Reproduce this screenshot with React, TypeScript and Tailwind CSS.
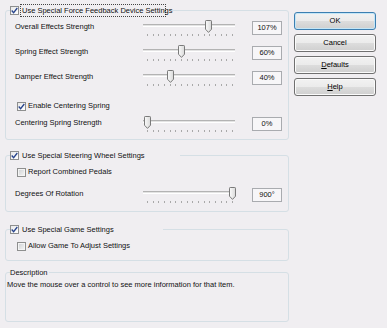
import React from "react";

function Check({ checked }: { checked: boolean }) {
  return (
    <span
      className={
        "w-[9px] h-[9px] shrink-0 border border-[#8e8f8f] flex items-center justify-center " +
        (checked
          ? "bg-[linear-gradient(135deg,#e9e9e9,#ffffff)]"
          : "bg-[linear-gradient(135deg,#cdd0d3,#f7f7f7)] shadow-[inset_0_0_0_1px_#f4f4f4]")
      }
    >
      {checked && (
        <svg width="7" height="7" viewBox="0 0 7 7">
          <path d="M0.7 3.5 L2.6 5.7 L6.3 1" stroke="#27438c" strokeWidth="1.3" fill="none" />
        </svg>
      )}
    </span>
  );
}

function Slider({ frac }: { frac: number }) {
  const left = 3 + Math.round(frac * 85);
  return (
    <div className="relative w-[96px] h-[18px] shrink-0">
      <div className="absolute left-[2px] right-[2px] top-[4px] h-[3px] border-t border-b border-t-[#b3b3b3] border-b-[#ffffff] bg-[#e3e3e3]" />
      <div className="absolute left-[6px] right-[4px] top-[14px] flex justify-between">
        {Array.from({ length: 16 }).map((_, i) => (
          <span key={i} className="w-px h-[2px] bg-[#a9a9a9]" />
        ))}
      </div>
      <svg className="absolute top-0" style={{ left }} width="7" height="13" viewBox="0 0 7 13">
        <defs>
          <linearGradient id="tg" x1="0" y1="0" x2="1" y2="0">
            <stop offset="0" stopColor="#fbfbfb" />
            <stop offset="1" stopColor="#d9d9d9" />
          </linearGradient>
        </defs>
        <path
          d="M1.2 0.5 H5.8 Q6.5 0.5 6.5 1.2 V9.2 L3.5 12.4 L0.5 9.2 V1.2 Q0.5 0.5 1.2 0.5 Z"
          fill="url(#tg)"
          stroke="#7a7a7a"
          strokeWidth="1"
        />
      </svg>
    </div>
  );
}

function SliderRow({
  label,
  frac,
  value,
  className,
}: {
  label: string;
  frac: number;
  value: string;
  className: string;
}) {
  return (
    <div className={"flex h-[18px] items-start " + className}>
      <span className="w-[126px] shrink-0 leading-[14px]">{label}</span>
      <Slider frac={frac} />
      <div className="ml-[15px] mt-[1px] w-[30px] h-[14px] border border-[#a9abaf] bg-[#f7f6f8] flex items-center justify-center leading-none">
        {value}
      </div>
    </div>
  );
}

function CheckRow({ label, checked, className }: { label: string; checked: boolean; className: string }) {
  return (
    <div className={"flex items-center h-[12px] ml-[2px] " + className}>
      <Check checked={checked} />
      <span className="ml-[2px] leading-none">{label}</span>
    </div>
  );
}

function Button({ children, primary }: { children: React.ReactNode; primary?: boolean }) {
  return (
    <button
      className={
        "h-[18px] w-[82px] rounded-[3px] border flex items-center justify-center leading-none text-black bg-[linear-gradient(to_bottom,#f2f2f2_0%,#ebebeb_50%,#dddddd_50%,#cfcfcf_100%)] " +
        (primary
          ? "border-[#3c7fb1] shadow-[inset_0_0_0_1px_#c4e6f7]"
          : "border-[#707070] shadow-[inset_0_0_0_1px_#fbfbfb]")
      }
    >
      {children}
    </button>
  );
}

export default function App() {
  return (
    <div className="w-[387px] h-[328px] bg-[#f0eef1] flex items-start pt-[4px] pl-[5px] text-[7.5px] text-[#111] whitespace-nowrap font-['Liberation_Sans',Arial,sans-serif] overflow-hidden">
      <div className="flex flex-col w-[284px] shrink-0">
        {/* Group 1 */}
        <fieldset className="border border-[#d5dfe5] rounded-[3px] w-[284px] pb-[5px]">
          <legend className="ml-[4px] p-0">
            <span className="flex items-center h-[13px] w-[160px]">
              <Check checked />
              <span className="ml-[1px] h-[13px] w-[146px] shrink-0 border border-dotted border-[#444] flex items-center pl-px leading-none">
                Use Special Force Feedback Device Settings
              </span>
            </span>
          </legend>
          <div className="pl-[9px] flex flex-col">
            <SliderRow label="Overall Effects Strength" frac={107 / 150} value="107%" className="mt-[3px]" />
            <SliderRow label="Spring Effect Strength" frac={60 / 150} value="60%" className="mt-[7px]" />
            <SliderRow label="Damper Effect Strength" frac={40 / 150} value="40%" className="mt-[7px]" />
            <CheckRow label="Enable Centering Spring" checked className="mt-[12px]" />
            <SliderRow label="Centering Spring Strength" frac={0} value="0%" className="mt-[4px]" />
          </div>
        </fieldset>

        {/* Group 2 */}
        <fieldset className="border border-[#d5dfe5] rounded-[3px] w-[284px] mt-[9px] pb-[6px]">
          <legend className="ml-[4px] p-0">
            <span className="flex items-center h-[13px] w-[170px]">
              <Check checked />
              <span className="ml-[1px] h-[13px] border border-transparent flex items-center pl-px leading-none">
                Use Special Steering Wheel Settings
              </span>
            </span>
          </legend>
          <div className="pl-[9px] flex flex-col">
            <CheckRow label="Report Combined Pedals" checked={false} className="mt-[4px]" />
            <SliderRow label="Degrees Of Rotation" frac={1} value="900°" className="mt-[9px]" />
          </div>
        </fieldset>

        {/* Group 3 */}
        <fieldset className="border border-[#d5dfe5] rounded-[3px] w-[284px] mt-[11px] pb-[8px]">
          <legend className="ml-[4px] p-0">
            <span className="flex items-center h-[13px] w-[153px]">
              <Check checked />
              <span className="ml-[1px] h-[13px] border border-transparent flex items-center pl-px leading-none">
                Use Special Game Settings
              </span>
            </span>
          </legend>
          <div className="pl-[9px] flex flex-col">
            <CheckRow label="Allow Game To Adjust Settings" checked={false} className="mt-[4px]" />
          </div>
        </fieldset>

        {/* Description */}
        <fieldset className="border border-[#d5dfe5] rounded-[3px] w-[284px] mt-[6px] h-[55px]">
          <legend className="ml-[4px] p-0">
            <span className="flex items-center h-[11px] pr-px leading-none">Description</span>
          </legend>
          <div className="pl-[1px] mt-[2px] leading-[10px]">
            Move the mouse over a control to see more information for that item.
          </div>
        </fieldset>
      </div>

      <div className="ml-[5px] mt-[8px] flex flex-col gap-[4px] w-[82px] shrink-0">
        <Button primary>OK</Button>
        <Button>Cancel</Button>
        <Button>
          <span>
            <span className="underline">D</span>efaults
          </span>
        </Button>
        <Button>
          <span>
            <span className="underline">H</span>elp
          </span>
        </Button>
      </div>
    </div>
  );
}
